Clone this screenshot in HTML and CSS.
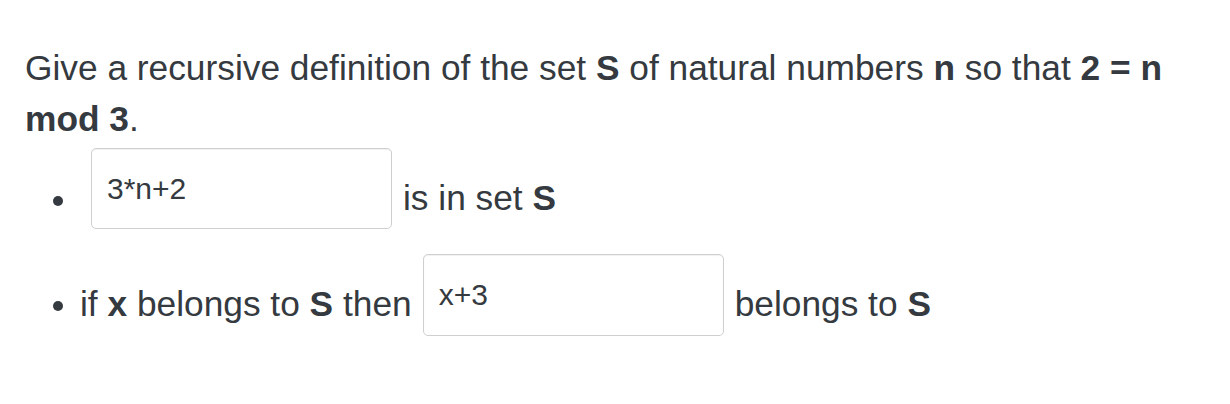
FILE: index.html
```html
<!DOCTYPE html>
<html lang="en">
<head>
<meta charset="utf-8">
<title>Recursive definition</title>
<link rel="stylesheet" href="styles.css">
</head>
<body>
<div class="question">
  <p class="prompt">Give a recursive definition of the set <b>S</b> of natural numbers <b>n</b> so that <b>2 = n mod 3</b>.</p>
  <ul class="rules">
    <li class="rule rule-base">
      <input class="answer answer-lead" type="text" value="3*n+2">
      <span class="words">is in set <b>S</b></span>
    </li>
    <li class="rule rule-step">
      <span class="words">if <b>x</b> belongs to <b>S</b> then</span>
      <input class="answer" type="text" value="x+3">
      <span class="words">belongs to <b>S</b></span>
    </li>
  </ul>
</div>
</body>
</html>
```
FILE: styles.css
```css
html, body {
  margin: 0;
  padding: 0;
  background: #ffffff;
}

body {
  font-family: "Liberation Sans", Arial, Helvetica, sans-serif;
  font-size: 35.3px;
  line-height: 51px;
  color: #343a40;
}

.question {
  padding: 42px 25px 0 25px;
}

.prompt {
  margin: 0;
}

.prompt b,
.words b {
  font-weight: 700;
}

.rules {
  list-style: none;
  margin: 4px 0 0 0;
  padding: 0 0 0 55px;
}

.rule {
  display: flex;
  align-items: flex-start;
  column-gap: 11px;
}

.rule::before {
  content: "";
  flex: none;
  width: 10px;
  height: 10px;
  border-radius: 50%;
  background: #343a40;
  margin-left: -27px;
  margin-right: 6px;
}

.rule-base {
  height: 81px;
}

.rule-base::before {
  margin-top: 48px;
}

.rule-base .words {
  margin-top: 24px;
}

.rule-step {
  margin-top: 25px;
  height: 82px;
}

.rule-step::before {
  margin-top: 47px;
}

.rule-step .words {
  margin-top: 24px;
}

.words {
  white-space: nowrap;
}

.answer {
  flex: none;
  box-sizing: border-box;
  width: 301px;
  height: 81px;
  margin: 0;
  padding: 0 15px;
  border: 1px solid #cfcfcf;
  border-radius: 5px;
  background: #ffffff;
  box-shadow: inset 0 1px 1px rgba(0, 0, 0, 0.06);
  font-family: "Liberation Sans", Arial, Helvetica, sans-serif;
  font-size: 30px;
  color: #343a40;
  outline: none;
}

.rule-step .answer {
  height: 82px;
}

.answer-lead {
  margin-left: 11px;
}
```
